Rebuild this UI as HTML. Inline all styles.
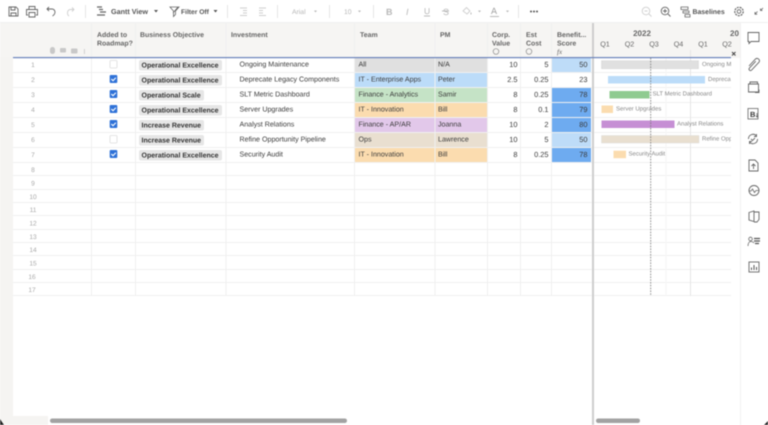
<!DOCTYPE html>
<html><head><meta charset="utf-8"><style>
html,body{margin:0;padding:0;width:768px;height:425px;overflow:hidden;background:#fff}
svg{display:block;filter:blur(.5px)}
text{font-family:"Liberation Sans",sans-serif;font-size:7.1px;fill:#3a3a3a;text-rendering:geometricPrecision}
.b{font-weight:bold;font-size:7px;fill:#333}.h{font-weight:bold;fill:#666;font-size:6.95px}.n{fill:#aaa;font-size:6.6px;text-anchor:middle}
.r{text-anchor:end;font-size:7.4px}.g{fill:#888;font-size:6px}.q{fill:#666;font-size:7.2px;text-anchor:middle}
.i{fill:none;stroke:#666;stroke-width:.9}.l{fill:none;stroke:#cfcfcf;stroke-width:.9}.t{font-weight:bold;fill:#555;font-size:7.2px}
</style></head><body>
<svg width="768" height="425" viewBox="0 0 768 425" xmlns="http://www.w3.org/2000/svg">
<rect width="768" height="425" fill="#fff"/>
<rect x="0" y="23" width="13" height="402" fill="#f5f4f2"/>
<rect x="13" y="416" width="35" height="9" fill="#f5f4f2"/>
<rect x="0" y="23" width="740" height="34" fill="#f6f5f3"/>
<rect x="0" y="22" width="768" height="1" fill="#f0f0f0"/>
<rect x="740" y="23" width="1" height="402" fill="#f1f1f1"/>

<!-- row fills -->
<rect x="355" y="58" width="132" height="15" fill="#e0e0e0"/>
<rect x="355" y="73" width="132" height="15" fill="#bcdcf9"/>
<rect x="355" y="88" width="132" height="15" fill="#c5e3c6"/>
<rect x="355" y="103" width="132" height="15" fill="#fbdcaf"/>
<rect x="355" y="118" width="132" height="15" fill="#e2c8ea"/>
<rect x="355" y="133" width="132" height="15" fill="#e9dfd0"/>
<rect x="355" y="148" width="132" height="15" fill="#fbdcaf"/>
<rect x="552" y="58" width="39" height="15" fill="#bedcf8"/>
<rect x="552" y="88" width="39" height="15" fill="#6eabf0"/>
<rect x="552" y="103" width="39" height="15" fill="#6eabf0"/>
<rect x="552" y="118" width="39" height="15" fill="#6eabf0"/>
<rect x="552" y="133" width="39" height="15" fill="#bedcf8"/>
<rect x="552" y="148" width="39" height="15" fill="#6eabf0"/>

<!-- grid lines -->
<g stroke="#f0f0f0" stroke-width="1" fill="none">
<path d="M13 72.500H731M13 87.500H731M13 102.500H731M13 117.500H731M13 132.500H731M13 147.500H731M13 162.500H731M13 175.500H731M13 189.500H731M13 202.500H731M13 215.500H731M13 229.500H731M13 242.500H731M13 255.500H731M13 269.500H731M13 282.500H731M13 295.500H731"/>
<path d="M91.500 23V296M135.500 23V296M226 23V296M354.500 23V296M435 23V296M487.500 23V296M520.500 23V296M551.500 23V296"/>
<path d="M666 58V296" stroke="#f5f5f5"/>
<path d="M690.500 50V296" stroke="#e6e6e6"/>
</g>
<rect x="592" y="23" width="2" height="402" fill="#cdcdcd"/>
<rect x="13" y="57" width="718" height="1.200" fill="#6a82ba"/>

<!-- gantt -->
<rect x="601.500" y="60.700" width="97" height="8" fill="#e0e0e0" stroke="#d4d4d4" stroke-width=".5"/>
<rect x="608" y="76" width="97" height="7.500" fill="#bcdcf9"/>
<rect x="609.500" y="91" width="40" height="7.500" fill="#8fcb90"/>
<rect x="601.500" y="105.500" width="11.500" height="7.500" fill="#fbdcaf"/>
<rect x="601.500" y="120.500" width="73" height="7.500" fill="#c68fd4"/>
<rect x="601.500" y="135.500" width="97.500" height="7.500" fill="#e9dfd0" stroke="#ddd" stroke-width=".5"/>
<rect x="613.500" y="150.700" width="12.500" height="7.500" fill="#fbdcaf"/>
<path d="M650.700 58V296" stroke="#777" stroke-width=".8" stroke-dasharray="1.600 1.200" fill="none"/>
<text class="g" x="702" y="66">Ongoing M</text>
<text class="g" x="708" y="81">Depreca</text>
<text class="g" x="652.500" y="95.500">SLT Metric Dashboard</text>
<text class="g" x="616" y="110.500">Server Upgrades</text>
<text class="g" x="677" y="125.500">Analyst Relations</text>
<text class="g" x="702" y="140.500">Refine Opp</text>
<text class="g" x="628.500" y="155.500">Security Audit</text>
<rect x="731" y="50" width="9" height="250" fill="#fff"/>
<rect x="731" y="50" width="9" height="8" fill="#f6f5f3"/>
<text x="642" y="36" style="font-size:8px;font-weight:bold;fill:#666;text-anchor:middle">2022</text>
<text x="730" y="36" style="font-size:8px;font-weight:bold;fill:#666">20</text>
<text class="q" x="605" y="46.500">Q1</text><text class="q" x="629.500" y="46.500">Q2</text><text class="q" x="654" y="46.500">Q3</text><text class="q" x="678.500" y="46.500">Q4</text><text class="q" x="703" y="46.500">Q1</text><text class="q" x="727" y="46.500">Q2</text>
<path d="M732 52l3.500 3.500M735.500 52l-3.500 3.500" stroke="#444" stroke-width="1"/>

<!-- header -->
<text class="h" x="97" y="37">Added to</text><text class="h" x="97" y="45.500">Roadmap?</text>
<text class="h" x="140" y="37">Business Objective</text>
<text class="h" x="231" y="37">Investment</text>
<text class="h" x="360" y="37">Team</text>
<text class="h" x="440" y="37">PM</text>
<text class="h" x="492" y="37">Corp.</text><text class="h" x="492" y="45.500">Value</text>
<text class="h" x="526" y="37">Est</text><text class="h" x="526" y="45.500">Cost</text>
<text class="h" x="557" y="37">Benefit...</text><text class="h" x="557" y="45.500">Score</text>
<circle cx="496" cy="51.500" r="2.800" style="fill:none;stroke:#888;stroke-width:.7"/>
<circle cx="529" cy="51.500" r="2.800" style="fill:none;stroke:#888;stroke-width:.7"/>
<text x="557" y="54" style="font-size:7px;fill:#666;font-style:italic;font-family:'Liberation Serif',serif">fx</text>
<g style="fill:#c8c8c8"><rect x="50" y="47" width="5" height="7" rx="2.400"/><rect x="60" y="48" width="6" height="4.500" rx="1"/><rect x="71" y="48.500" width="6.500" height="5" rx="1"/><rect x="84" y="49" width=".8" height="5"/></g>

<!-- row numbers -->
<text class="n" x="33" y="67">1</text><text class="n" x="33" y="82">2</text><text class="n" x="33" y="97">3</text><text class="n" x="33" y="112">4</text><text class="n" x="33" y="127">5</text><text class="n" x="33" y="142">6</text><text class="n" x="33" y="157">7</text>
<text class="n" x="33" y="172">8</text><text class="n" x="33" y="185.500">9</text><text class="n" x="33" y="199">10</text><text class="n" x="33" y="212">11</text><text class="n" x="33" y="225.500">12</text><text class="n" x="33" y="239">13</text><text class="n" x="33" y="252">14</text><text class="n" x="33" y="265.500">15</text><text class="n" x="32" y="279">16</text><text class="n" x="32" y="292">17</text>

<!-- checkboxes -->
<rect x="110" y="60.500" width="7" height="7.500" rx="1" fill="#fff" stroke="#ddd" stroke-width=".8"/>
<rect x="110" y="135.500" width="7" height="7.500" rx="1" fill="#fff" stroke="#ddd" stroke-width=".8"/>
<g fill="#2f72d8"><rect x="109.700" y="75" width="7.600" height="8" rx="1"/><rect x="109.700" y="90" width="7.600" height="8" rx="1"/><rect x="109.700" y="105" width="7.600" height="8" rx="1"/><rect x="109.700" y="120" width="7.600" height="8" rx="1"/><rect x="109.700" y="150" width="7.600" height="8" rx="1"/></g>
<g fill="none" stroke="#fff" stroke-width="1.100"><path d="M111.300 79l1.700 1.700 2.800-3"/><path d="M111.300 94l1.700 1.700 2.800-3"/><path d="M111.300 109l1.700 1.700 2.800-3"/><path d="M111.300 124l1.700 1.700 2.800-3"/><path d="M111.300 154l1.700 1.700 2.800-3"/></g>

<!-- pills -->
<g fill="#e6e6e6"><rect x="139" y="60" width="83" height="10.500" rx="2"/><rect x="139" y="75" width="83" height="10.500" rx="2"/><rect x="139" y="90" width="65" height="10.500" rx="2"/><rect x="139" y="105" width="83" height="10.500" rx="2"/><rect x="139" y="120" width="65" height="10.500" rx="2"/><rect x="139" y="135" width="65" height="10.500" rx="2"/><rect x="139" y="150" width="83" height="10.500" rx="2"/></g>
<text class="b" x="141.500" y="67.700">Operational Excellence</text><text class="b" x="141.500" y="82.700">Operational Excellence</text><text class="b" x="141.500" y="97.700">Operational Scale</text><text class="b" x="141.500" y="112.700">Operational Excellence</text><text class="b" x="141.500" y="127.700">Increase Revenue</text><text class="b" x="141.500" y="142.700">Increase Revenue</text><text class="b" x="141.500" y="157.700">Operational Excellence</text>

<!-- investment -->
<text x="239.500" y="66.700">Ongoing Maintenance</text>
<text x="239.500" y="81.700">Deprecate Legacy Components</text>
<text x="239.500" y="96.700">SLT Metric Dashboard</text>
<text x="239.500" y="111.700">Server Upgrades</text>
<text x="239.500" y="126.700">Analyst Relations</text>
<text x="239.500" y="141.700">Refine Opportunity Pipeline</text>
<text x="239.500" y="156.700">Security Audit</text>
<!-- team / pm -->
<text x="358.500" y="66.700">All</text><text x="438" y="66.700">N/A</text>
<text x="358.500" y="81.700">IT - Enterprise Apps</text><text x="438" y="81.700">Peter</text>
<text x="358.500" y="96.700">Finance - Analytics</text><text x="438" y="96.700">Samir</text>
<text x="358.500" y="111.700">IT - Innovation</text><text x="438" y="111.700">Bill</text>
<text x="358.500" y="126.700">Finance - AP/AR</text><text x="438" y="126.700">Joanna</text>
<text x="358.500" y="141.700">Ops</text><text x="438" y="141.700">Lawrence</text>
<text x="358.500" y="156.700">IT - Innovation</text><text x="438" y="156.700">Bill</text>
<!-- numbers -->
<text class="r" x="517.500" y="67">10</text><text class="r" x="548.500" y="67">5</text><text class="r" x="587.500" y="67">50</text>
<text class="r" x="517.500" y="82">2.5</text><text class="r" x="548.500" y="82">0.25</text><text class="r" x="587.500" y="82">23</text>
<text class="r" x="517.500" y="97">8</text><text class="r" x="548.500" y="97">0.25</text><text class="r" x="587.500" y="97">78</text>
<text class="r" x="517.500" y="112">8</text><text class="r" x="548.500" y="112">0.1</text><text class="r" x="587.500" y="112">79</text>
<text class="r" x="517.500" y="127">10</text><text class="r" x="548.500" y="127">2</text><text class="r" x="587.500" y="127">80</text>
<text class="r" x="517.500" y="142">10</text><text class="r" x="548.500" y="142">5</text><text class="r" x="587.500" y="142">50</text>
<text class="r" x="517.500" y="157">8</text><text class="r" x="548.500" y="157">0.25</text><text class="r" x="587.500" y="157">78</text>

<!-- toolbar -->
<path class="i" d="M9 7h7l2 2v7H9zM11 7v3h4V7M11 16v-3h5v3"/>
<path class="i" d="M29 9V6.500h6V9M28 15h-1.500V9.500h11V15H36M29 12.500h6V17h-6z"/>
<path class="i" d="M49 7l-2 2 2 2M47 9h5a3 3 0 0 1 3 3c0 2-1 3-2.500 4"/>
<path class="l" d="M72 7.500l2 2-2 2M74 9.500h-3.500a3 3 0 0 0-3 3c0 2 .5 3 1.500 3.500"/>
<path d="M85.500 5v13" stroke="#e6e6e6"/>
<path class="i" d="M97 7h5M99 9.500h4M100 12h6M97 15h8" style="stroke-width:1.300"/>
<text class="t" x="111" y="14">Gantt View</text>
<path d="M154 10h4l-2 2.500z" fill="#555"/>
<path class="i" d="M170 7h9l-3.500 4v3.500l-2 2V11zM173 13l5-6" style="stroke-width:.8"/>
<text class="t" x="181" y="14" style="font-size:6.700px">Filter Off</text>
<path d="M213.500 10h4l-2 2.500z" fill="#555"/>
<path d="M227.500 5v13M277.500 5v13M329.500 5v13M373.500 5v13M518.500 5v13" stroke="#e6e6e6"/>
<path class="l" d="M240 8h7M243 10.500h4M243 13h4M240 15.500h7M259 8h7M259 10.500h4M259 13h4M259 15.500h7"/>
<text x="292" y="14" style="fill:#b8b8b8;font-size:6.800px">Arial</text>
<path d="M314 10.500h3l-1.500 2z" fill="#bbb"/>
<text x="344" y="14" style="fill:#b8b8b8;font-size:6.800px">10</text>
<path d="M358 10.500h3l-1.500 2z" fill="#bbb"/>
<text x="386" y="15" style="fill:#b8b8b8;font-size:9px;font-weight:bold">B</text>
<text x="406" y="15" style="fill:#b8b8b8;font-size:9px;font-style:italic">I</text>
<text x="424" y="14" style="fill:#b8b8b8;font-size:8.500px">U</text><path d="M424 16h6" stroke="#bbb"/>
<text x="443" y="15" style="fill:#b8b8b8;font-size:9px">S</text><path d="M442 11h7" stroke="#bbb"/>
<path class="l" d="M463 11l3.500-3.500 3.500 3.500-3 3z"/><path d="M471 12.500v2" stroke="#bbb"/>
<path d="M478 10.500h3l-1.500 2z" fill="#bbb"/>
<text x="491" y="14" style="fill:#a0a0a0;font-size:9px">A</text><path d="M490 16.500h9" stroke="#bbb"/>
<path d="M506 10.500h3l-1.500 2z" fill="#bbb"/>
<g fill="#555"><circle cx="531" cy="11.500" r="1"/><circle cx="534" cy="11.500" r="1"/><circle cx="537" cy="11.500" r="1"/></g>
<circle cx="646" cy="11" r="3.800" class="l"/><path class="l" d="M649 14l2.500 2.500M644.500 11h3"/>
<circle cx="665" cy="11" r="3.800" class="i"/><path class="i" d="M668 14l2.500 2.500M663 11h4M665 9v4"/>
<path class="i" d="M681 7h7v2.500h-7zM683 11h6v2h-6zM685 14.500h5V17h-5z" style="stroke-width:.8"/>
<text class="t" x="692.500" y="14" style="font-size:6.900px">Baselines</text>
<circle cx="739" cy="11.500" r="1.800" class="i"/><circle cx="739" cy="11.500" r="4.200" class="i" stroke-dasharray="2 .9" style="stroke-width:1.200"/>
<path class="i" d="M755 14l2.500-2.500M755 12v2.200h2.200M763 8l-2.500 2.500M760.500 8.500v2h2" style="stroke-width:.8"/>

<!-- side icons -->
<path class="i" d="M748 32.500h11v9h-8l-2 2v-2h-1z" style="stroke-width:.9"/>
<path class="i" d="M749 66l6.500-7a2.400 2.400 0 0 1 3.500 3.200l-7.500 8a1.500 1.500 0 0 1-2.200-2l6.500-7" style="stroke-width:.9"/>
<path class="i" d="M748.500 84h10v8h-10zM750 84v-2h7.500v2M755 92.500h4v-3" style="stroke-width:.9"/>
<rect x="748" y="108.500" width="10" height="10.500" class="i" style="stroke-width:.8"/><text x="750" y="117" style="font-size:7.500px;font-weight:bold">B</text><path d="M757 113v4l-1-1M757 117l1-1" stroke="#555" stroke-width=".7" fill="none"/>
<path class="i" d="M748.500 139a4.500 4.500 0 0 1 8-3M757.500 139a4.500 4.500 0 0 1-8 3M756.500 134v2.500h-2.500M749.500 144v-2.500h2.500M751 139l1.500 1.500 2.500-2.500" style="stroke-width:.9"/>
<path class="i" d="M749 160h6l3 3v8h-9zM753.500 169v-5M751.500 166l2-2 2 2" style="stroke-width:.9"/>
<circle cx="754" cy="190.500" r="5" class="i" style="stroke-width:.9"/><path class="i" d="M749 191h2l1.500-2 2 3.500 1.500-2h3" style="stroke-width:.8"/>
<path class="i" d="M749 212.500l5-1.500v10.500l-5-1.500zM754 212h5v7.500l-2 2.500h-3" style="stroke-width:.9"/>
<circle cx="750.500" cy="239" r="1.800" class="i" style="stroke-width:.8"/><path class="i" d="M748 246c0-2.500 1-4.500 3-4.500s2.500 1 3 1.500" style="stroke-width:.8"/>
<path d="M754 238.500h6M754 241h6M755 243.500h4" stroke="#555" stroke-width="1.200"/>
<rect x="749" y="262" width="10" height="10" class="i" style="stroke-width:.9"/><path d="M751.500 270v-2.500M754 270v-5M756.500 270v-3" stroke="#555" stroke-width="1"/>

<!-- scrollbars -->
<rect x="50" y="418.500" width="297" height="4.500" rx="2.200" fill="#a2a2a2"/>
<rect x="596" y="418.500" width="44" height="4.500" rx="2.200" fill="#a2a2a2"/>
<path d="M0 419v6h4z" fill="#222"/><path d="M768 421v4h-4z" fill="#222"/>
</svg>
</body></html>
